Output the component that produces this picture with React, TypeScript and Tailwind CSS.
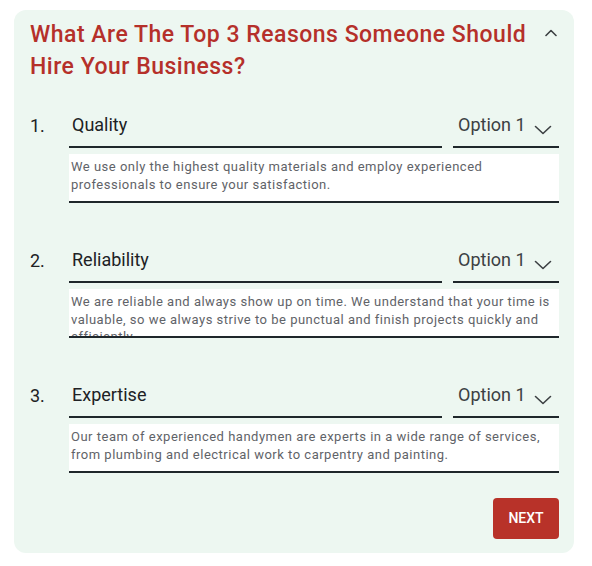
import React from "react";

const rows = [
  {
    n: "1.",
    title: "Quality",
    desc: "We use only the highest quality materials and employ experienced professionals to ensure your satisfaction.",
  },
  {
    n: "2.",
    title: "Reliability",
    desc: "We are reliable and always show up on time. We understand that your time is valuable, so we always strive to be punctual and finish projects quickly and efficiently.",
  },
  {
    n: "3.",
    title: "Expertise",
    desc: "Our team of experienced handymen are experts in a wide range of services, from plumbing and electrical work to carpentry and painting.",
  },
];

function ChevronDown() {
  return (
    <svg width="18" height="10" viewBox="0 0 18 10" fill="none">
      <path d="M1.5 1.5 L9 8.5 L16.5 1.5" stroke="#3c4043" strokeWidth="1.6" strokeLinecap="round" strokeLinejoin="round" />
    </svg>
  );
}

function ChevronUp() {
  return (
    <svg width="12" height="8" viewBox="0 0 12 8" fill="none">
      <path d="M1 6.5 L6 1.5 L11 6.5" stroke="#3c4043" strokeWidth="1.6" strokeLinecap="round" strokeLinejoin="round" />
    </svg>
  );
}

export default function App() {
  return (
    <div className="w-[592px] h-[566px] bg-white pt-[10px] pl-[14px]" style={{ fontFamily: "Roboto, 'Noto Sans', sans-serif" }}>
      <div className="w-[560px] h-[543px] rounded-[12px] bg-[#edf7f1] pl-[16px] pr-[15px] pt-[9px] flex flex-col">
        <div className="flex items-start justify-between">
          <h1 className="w-[510px] text-[23px] leading-[32px] tracking-[0.5px] font-medium text-[#b5302a]">
            What Are The Top 3 Reasons Someone Should Hire Your Business?
          </h1>
          <div className="mt-[10px] mr-[2px]">
            <ChevronUp />
          </div>
        </div>

        <div className="mt-[25px] flex flex-col gap-[40px]">
          {rows.map((r) => (
            <div key={r.n} className="flex">
              <div className="w-[39px] h-[40px] pb-[6px] flex items-center text-[18px] text-[#202124]">{r.n}</div>
              <div className="flex-1 flex flex-col">
                <div className="flex gap-[11px]">
                  <div className="flex-1 h-[40px] pb-[6px] border-b-2 border-[#1f272b] flex items-center pl-[3px] text-[18px] text-[#202124]">
                    {r.title}
                  </div>
                  <div className="w-[106px] h-[40px] pb-[6px] border-b-2 border-[#1f272b] flex items-center justify-between pl-[5px] pr-[7px] text-[18px] text-[#3c4043]">
                    <span>Option 1</span>
                    <span className="mt-[12px]">
                      <ChevronDown />
                    </span>
                  </div>
                </div>
                <div className="mt-[6px] h-[49px] bg-white border-b-2 border-[#1f272b] overflow-hidden pt-[4px] pl-[2px] pr-[4px] text-[13px] leading-[17.5px] tracking-[0.5px] text-[#5f6368]">
                  {r.desc}
                </div>
              </div>
            </div>
          ))}
        </div>

        <div className="mt-[25px] flex justify-end">
          <button className="w-[66px] h-[41px] rounded-[4px] bg-[#b83229] text-white text-[14px] font-medium">NEXT</button>
        </div>
      </div>
    </div>
  );
}
